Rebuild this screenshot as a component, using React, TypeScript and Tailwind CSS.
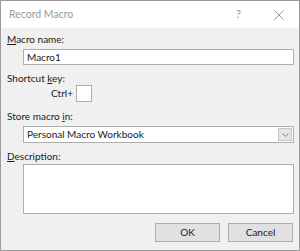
import React from 'react';

const Label: React.FC<{ children: React.ReactNode; className?: string }> = ({ children, className = '' }) => (
  <div className={`h-[13px] leading-[13px] ${className}`}>{children}</div>
);

const App: React.FC = () => {
  return (
    <div
      className="w-[300px] h-[251px] border border-[#9a9a9a] bg-[#f0f0f0] flex flex-col text-[10px] text-[#1a1a1a] select-none"
      style={{ fontFamily: 'Lato, "Noto Sans", sans-serif' }}
    >
      {/* title bar */}
      <div className="h-[27px] bg-white flex items-center pl-[8px] text-[#9a9a9a]">
        <span className="text-[10.5px]">Record Macro</span>
        <span className="ml-auto mr-[33px] text-[11px]">?</span>
        <svg width="10" height="10" viewBox="0 0 10 10" className="mr-[15px]">
          <path d="M0.5 0.5 L9.5 9.5 M9.5 0.5 L0.5 9.5" stroke="#9a9a9a" strokeWidth="1" />
        </svg>
      </div>

      <div className="flex flex-col pl-[6px] pt-[5px]">
        <Label>
          <span className="underline">M</span>acro name:
        </Label>
        <div className="ml-[16px] mt-[3px] w-[271px] h-[16px] bg-white border border-[#adadad] flex items-center pl-[3px]">
          Macro1
        </div>

        <Label className="mt-[7px]">
          Shortcut <span className="underline">k</span>ey:
        </Label>
        <div className="flex items-center justify-end w-[85px] h-[17px]">
          <span className="mr-[3px]">Ctrl+</span>
          <div className="w-[16px] h-[17px] bg-white border border-[#adadad]" />
        </div>

        <Label className="mt-[8px]">
          Store macro <span className="underline">i</span>n:
        </Label>
        <div className="ml-[16px] mt-[3px] w-[271px] h-[17px] bg-white border border-[#adadad] flex items-center">
          <span className="pl-[3px]">Personal Macro Workbook</span>
          <div className="ml-auto mr-px h-[13px] w-[14px] bg-[#e6e6e6] border border-[#c4c4c4] flex items-center justify-center">
            <svg width="7" height="4" viewBox="0 0 7 4">
              <path d="M0.5 0.5 L3.5 3.5 L6.5 0.5" stroke="#808080" strokeWidth="1" fill="none" />
            </svg>
          </div>
        </div>

        <Label className="mt-[7px]">
          <span className="underline">D</span>escription:
        </Label>
        <div className="ml-[16px] mt-[1px] w-[271px] h-[50px] bg-white border border-[#adadad]" />
      </div>

      <div className="flex justify-end gap-[8px] pr-[6px] mt-[9px]">
        <button className="w-[65px] h-[19px] bg-[#e1e1e1] border border-[#adadad] flex items-center justify-center">
          OK
        </button>
        <button className="w-[65px] h-[19px] bg-[#e1e1e1] border border-[#adadad] flex items-center justify-center">
          Cancel
        </button>
      </div>
    </div>
  );
};

export default App;
